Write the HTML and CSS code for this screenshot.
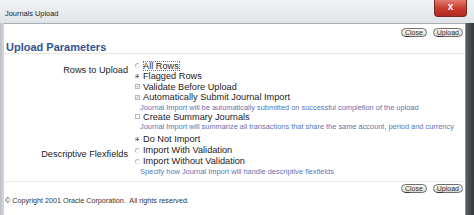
FILE: index.html
```html
<!DOCTYPE html>
<html lang="en">
<head>
    <meta charset="UTF-8">
    <title>Journals Upload</title>
    <link rel="stylesheet" href="styles.css">
</head>
<body>
    <div class="window">
        <div class="titlebar">
            <span class="title">Journals Upload</span>
            <span class="win-close">x</span>
        </div>
        <div class="frame">
            <div class="frame-left"></div>
            <div class="content">
                <div class="button-bar">
                    <button class="pill"><u>C</u>lose</button>
                    <button class="pill"><u>U</u>pload</button>
                </div>
                <h2 class="heading">Upload Parameters</h2>

                <div class="section first">
                    <div class="label">Rows to Upload</div>
                    <div class="options">
                        <div class="opt"><span class="radio"></span><span class="boxed">All Rows</span></div>
                        <div class="opt"><span class="radio checked"></span>Flagged Rows</div>
                        <div class="opt"><span class="check on"><svg viewBox="0 0 6 6"><path d="M1 3 L2.5 4.6 L5 1.2" fill="none" stroke="#555" stroke-width="1"/></svg></span>Validate Before Upload</div>
                        <div class="opt"><span class="check on"><svg viewBox="0 0 6 6"><path d="M1 3 L2.5 4.6 L5 1.2" fill="none" stroke="#555" stroke-width="1"/></svg></span>Automatically Submit Journal Import</div>
                        <div class="tip">Journal Import will be automatically submitted on successful completion of the upload</div>
                        <div class="opt"><span class="check"></span>Create Summary Journals</div>
                        <div class="tip">Journal Import will summarize all transactions that share the same account, period and currency</div>
                    </div>
                </div>

                <div class="section second">
                    <div class="label">Descriptive Flexfields</div>
                    <div class="options">
                        <div class="opt"><span class="radio checked"></span>Do Not Import</div>
                        <div class="opt"><span class="radio"></span>Import With Validation</div>
                        <div class="opt"><span class="radio"></span>Import Without Validation</div>
                        <div class="tip">Specify how Journal Import will handle descriptive flexfields</div>
                    </div>
                </div>

                <div class="button-bar bottom">
                    <button class="pill"><u>C</u>lose</button>
                    <button class="pill"><u>U</u>pload</button>
                </div>
                <p class="copyright">&copy; Copyright 2001 Oracle Corporation.  All rights reserved.</p>
            </div>
            <div class="frame-right"></div>
        </div>
    </div>
</body>
</html>
```

FILE: styles.css
```css
body {
    margin: 0;
    width: 474px;
    height: 215px;
    overflow: hidden;
    font-family: "Liberation Sans", Arial, sans-serif;
    color: #222;
}

.window {
    display: flex;
    flex-direction: column;
    height: 215px;
    background-color: #cfd4da;
}

.titlebar {
    display: flex;
    align-items: flex-start;
    height: 23px;
    background: linear-gradient(to bottom, #f1f2f4, #e1e4e8);
}

.title {
    margin: 9px 0 0 5px;
    font-size: 7.4px;
    line-height: 9px;
    color: #1e1e1e;
}

.win-close {
    margin-left: auto;
    margin-right: 7px;
    width: 33px;
    height: 17px;
    border-radius: 0 0 4px 4px;
    background: linear-gradient(to bottom, #e27a6e, #c9392e 55%, #b02a22);
    border: 1px solid #7a2a24;
    border-top: none;
    box-sizing: border-box;
    color: #fff;
    font-size: 10px;
    font-weight: bold;
    text-align: center;
    line-height: 14px;
}

.frame {
    display: flex;
    flex: 1;
}

.frame-left {
    width: 4px;
    background: linear-gradient(to right, #b9bec4, #d6dade);
}

.frame-right {
    width: 8px;
    border-left: 1px solid #8d9297;
    background: linear-gradient(to right, #5b5f64, #34373b);
}

.content {
    flex: 1;
    background-color: #fff;
    border-top: 1px solid #a9aeb4;
}

.button-bar {
    display: flex;
    justify-content: flex-end;
    gap: 6px;
    margin-top: 4px;
    padding-right: 2px;
}

.pill {
    height: 9px;
    padding: 0 3px;
    border: 1px solid #6d6d6d;
    border-radius: 5px;
    background: linear-gradient(to bottom, #fbfaf6, #dcd9cf);
    font-family: "Liberation Sans", Arial, sans-serif;
    font-size: 7px;
    line-height: 7px;
    color: #333;
}

.heading {
    margin: 4px 0 0;
    padding-left: 2px;
    font-size: 11px;
    line-height: 12px;
    font-weight: bold;
    color: #33528e;
    border-bottom: 1px solid #e9e6da;
}

.section {
    display: flex;
    gap: 7px;
    font-size: 9.2px;
}

.section.first {
    margin-top: 6.5px;
    line-height: 10.5px;
}

.section.second {
    margin-top: 3px;
    line-height: 11px;
}

.label {
    width: 124px;
    text-align: right;
}

.first .label {
    padding-top: 4.5px;
}

.second .label {
    padding-top: 15px;
}

.opt {
    display: flex;
    align-items: center;
    white-space: nowrap;
}

.radio,
.check {
    width: 5px;
    height: 5px;
    margin-right: 3px;
    box-sizing: border-box;
    border: 1px solid #b8b8b8;
    background-color: #fff;
    flex-shrink: 0;
}

.radio {
    border-radius: 50%;
    border-right-color: #eee;
    border-bottom-color: #eee;
}

.radio.checked {
    background: radial-gradient(circle, #555 45%, #fff 60%);
}

.check svg {
    display: block;
    width: 100%;
    height: 100%;
}

.boxed {
    outline: 1px dotted #777;
    outline-offset: -1px;
    padding: 0 1px 0 0;
}

.tip {
    padding-left: 5px;
    font-size: 7.4px;
    line-height: 9px;
    color: #5a74b4;
    white-space: nowrap;
}

.button-bar.bottom {
    margin-top: 5px;
    padding-top: 2px;
    border-top: 1px solid #ece9df;
}

.copyright {
    margin: 3px 0 0 1px;
    font-size: 7.2px;
    line-height: 9px;
    color: #333;
    white-space: pre;
}
```
